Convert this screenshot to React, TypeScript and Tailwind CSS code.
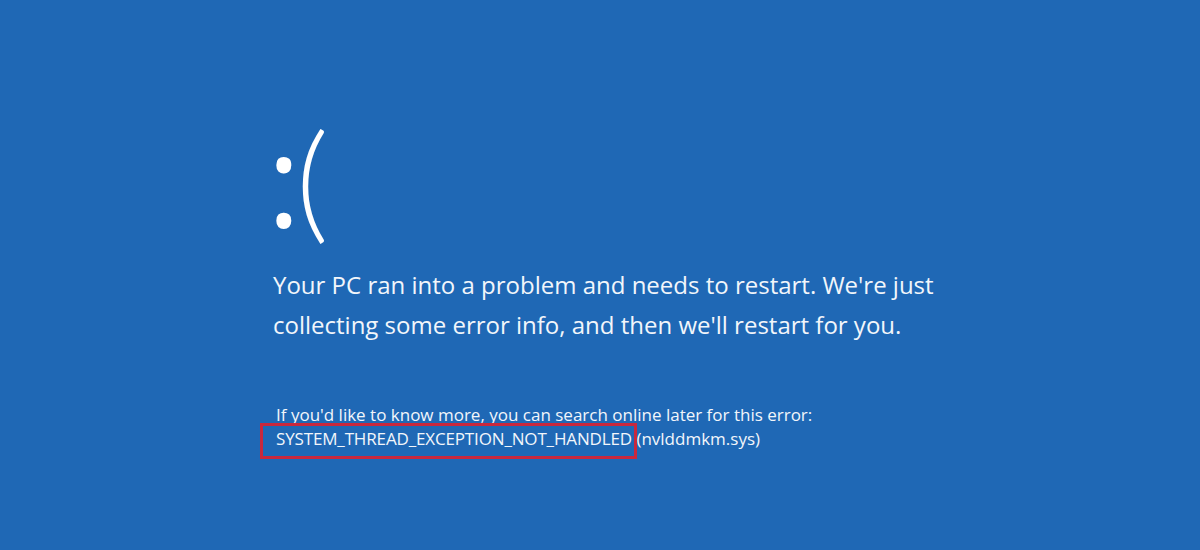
export default function App() {
    return (
        <div className="w-[1200px] h-[550px] bg-[#1f68b5] text-white overflow-hidden font-['Open_Sans','Noto_Sans',sans-serif]">
            <div className="pl-[273px] pt-[114px] flex flex-col">
                <div className="flex items-baseline h-[125px]">
                    <span className="-ml-[6px] text-[128px] leading-none tracking-[-5px]">:</span>
                    <span className="text-[128px] leading-none font-light font-['Lato','Open_Sans',sans-serif]">(</span>
                </div>
                <p className="mt-[26px] text-[24px] leading-[40px] text-[#f2f6fb]">
                    Your PC ran into a problem and needs to restart. We're just
                    <br />
                    collecting some error info, and then we'll restart for you.
                </p>
                <div className="mt-[58px] pl-[3px] text-[17px] leading-[24px] text-[#f2f6fb]">
                    <p>If you'd like to know more, you can search online later for this error:</p>
                    <p>
                        <span className="relative tracking-[-0.15px]">
                            SYSTEM_THREAD_EXCEPTION_NOT_HANDLED
                            <span className="absolute -left-[16px] -right-[5px] -top-[4px] -bottom-[9px] border-[3px] border-[#c9283d]" />
                        </span>{" "}
                        (nvlddmkm.sys)
                    </p>
                </div>
            </div>
        </div>
    )
}
